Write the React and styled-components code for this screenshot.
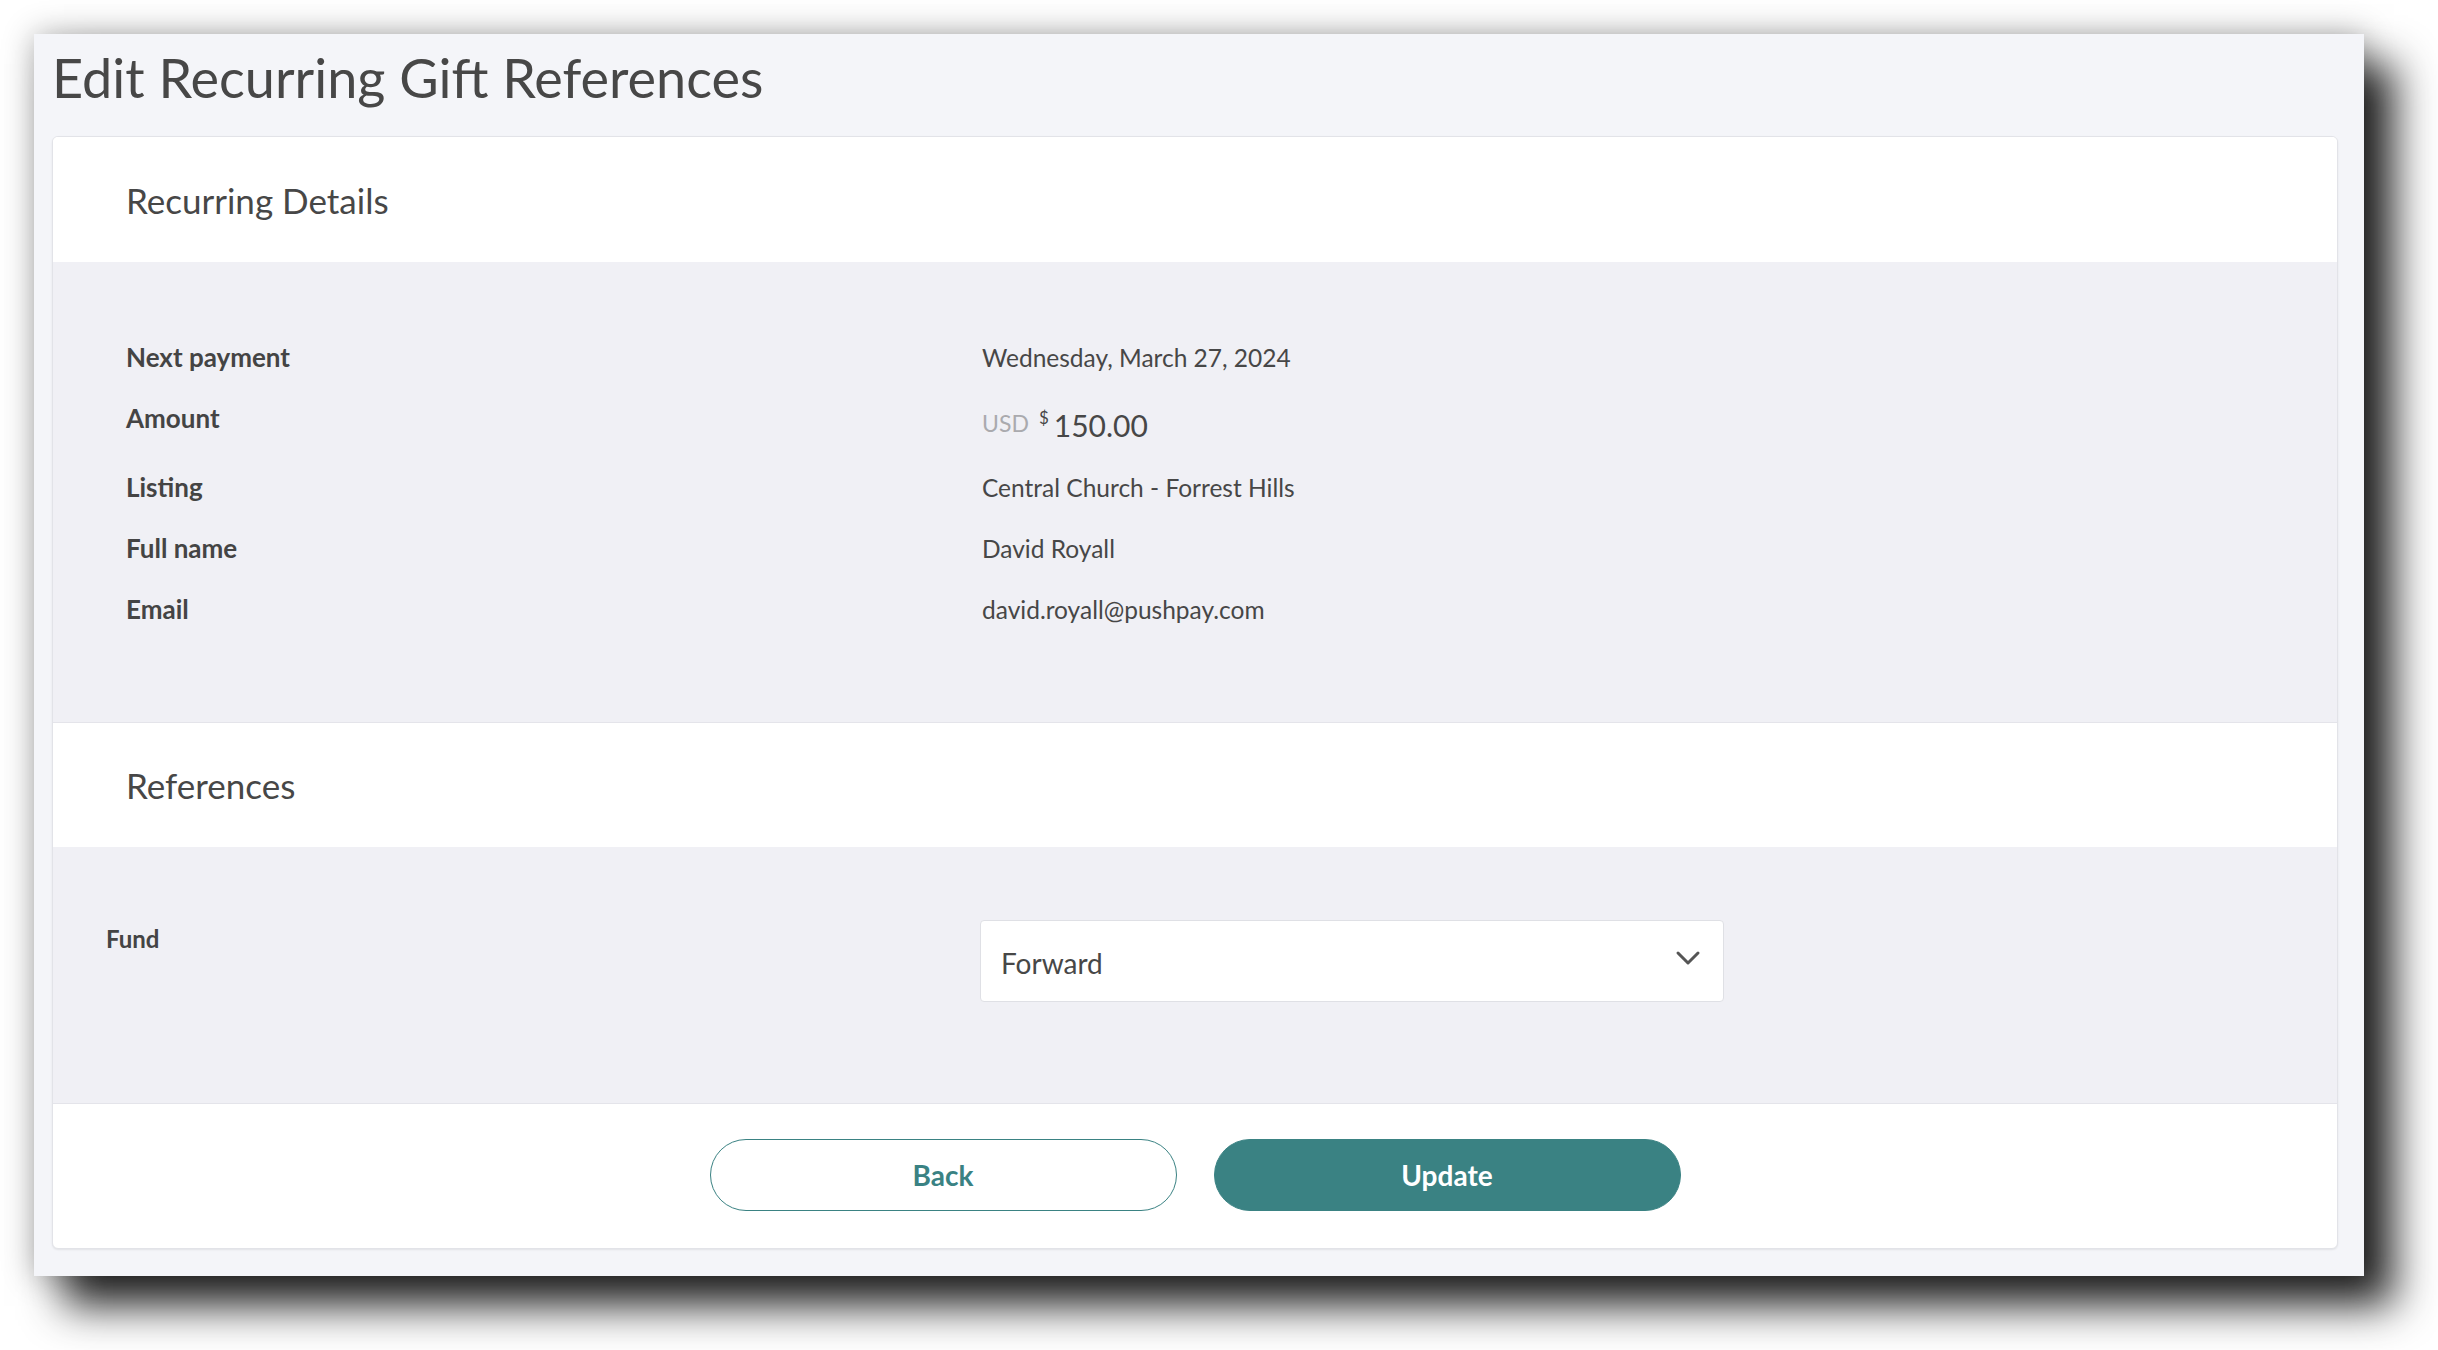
import React from 'react';
import styled, { createGlobalStyle } from 'styled-components';

const teal = '#3a8283';
const ink = '#474747';

const GlobalStyle = createGlobalStyle`
  html, body {
    margin: 0;
    padding: 0;
    min-height: 100%;
    background: #ffffff;
  }
  body {
    font-family: Lato, "Open Sans", sans-serif;
    color: ${ink};
  }
  * {
    box-sizing: border-box;
  }
`;

const Page = styled.div`
  min-height: 100vh;
  padding: 34px 0 74px 34px;
`;

const Window = styled.div`
  width: 2330px;
  height: 1242px;
  padding: 0 26px 0 18px;
  background: #f4f5f9;
  box-shadow: 30px 30px 40px rgba(0, 0, 0, 0.85), 0 0 30px rgba(0, 0, 0, 0.3);
  display: flex;
  flex-direction: column;
`;

const PageTitle = styled.h1`
  margin: 0;
  height: 102px;
  padding-top: 17px;
  font-size: 54px;
  line-height: 1;
  font-weight: 400;
  color: ${ink};
`;

const Card = styled.div`
  background: #ffffff;
  border: 1px solid #e2e3e8;
  border-radius: 6px;
  box-shadow: 0 1px 2px rgba(0, 0, 0, 0.08);
  overflow: hidden;
`;

const SectionHeader = styled.div`
  height: ${(props) => props.height}px;
  border-top: ${(props) => (props.divided ? '1px solid #e4e4ea' : 'none')};
  display: flex;
  align-items: center;
  padding-left: 73px;
  background: #ffffff;
`;

const SectionTitle = styled.h2`
  margin: 0;
  font-size: 35px;
  font-weight: 400;
  color: ${ink};
`;

const SectionBody = styled.div`
  background: #f0f0f5;
  height: ${(props) => props.height}px;
  padding: ${(props) => props.padding};
`;

const DetailRow = styled.div`
  display: grid;
  grid-template-columns: 856px 1fr;
  height: ${(props) => props.height || 61}px;
  line-height: 61px;
`;

const DetailLabel = styled.div`
  font-size: 26px;
  font-weight: 700;
  color: #444;
`;

const DetailValue = styled.div`
  font-size: 24.5px;
  font-weight: 400;
  color: ${ink};
`;

const AmountValue = styled.div`
  line-height: 60px;
  white-space: nowrap;
`;

const Currency = styled.span`
  font-size: 23px;
  color: #aaaaae;
  vertical-align: 5px;
  margin-right: 10px;
`;

const Dollar = styled.span`
  font-size: 17px;
  vertical-align: 13px;
  margin-right: 5px;
`;

const Figure = styled.span`
  font-size: 30px;
`;

const FieldRow = styled.div`
  display: grid;
  grid-template-columns: 874px 744px;
  align-items: start;
`;

const FieldLabel = styled.label`
  padding-top: 5px;
  font-size: 24px;
  line-height: 1.2;
  font-weight: 700;
  color: #444;
`;

const Select = styled.div`
  height: 82px;
  background: #ffffff;
  border: 1px solid #dfe0e5;
  border-radius: 4px;
  display: flex;
  align-items: center;
  justify-content: space-between;
  padding: 4px 22px 0 20px;
  font-size: 28px;
  color: ${ink};
`;

const Chevron = () => (
  <svg width="26" height="16" viewBox="0 0 26 16" style={{ marginTop: -10 }}>
    <polyline
      points="3,3 13,13 23,3"
      fill="none"
      stroke="#555"
      strokeWidth="3"
      strokeLinecap="round"
      strokeLinejoin="round"
    />
  </svg>
);

const Footer = styled.div`
  border-top: 1px solid #e4e4ea;
  height: 145px;
  padding-top: 35px;
  display: flex;
  justify-content: center;
  gap: 37px;
`;

const Button = styled.button`
  width: 467px;
  height: 72px;
  border-radius: 36px;
  border: 1.5px solid ${teal};
  background: ${(props) => (props.primary ? teal : '#ffffff')};
  color: ${(props) => (props.primary ? '#ffffff' : teal)};
  font-family: Lato, "Open Sans", sans-serif;
  font-size: 28px;
  font-weight: 700;
  cursor: pointer;
`;

const details = [
  { label: 'Next payment', value: 'Wednesday, March 27, 2024' },
  { label: 'Amount', amount: '150.00' },
  { label: 'Listing', value: 'Central Church - Forrest Hills' },
  { label: 'Full name', value: 'David Royall' },
  { label: 'Email', value: 'david.royall@pushpay.com' },
];

export default function App() {
  return (
    <>
      <GlobalStyle />
      <Page>
        <Window>
          <PageTitle>Edit Recurring Gift References</PageTitle>
          <Card>
            <SectionHeader height={125}>
              <SectionTitle>Recurring Details</SectionTitle>
            </SectionHeader>
            <SectionBody height={460} padding="65px 0 0 73px">
              {details.map(({ label, value, amount }) => (
                <DetailRow key={label} height={amount ? 69 : 61}>
                  <DetailLabel>{label}</DetailLabel>
                  {amount ? (
                    <AmountValue>
                      <Currency>USD</Currency>
                      <Dollar>$</Dollar>
                      <Figure>{amount}</Figure>
                    </AmountValue>
                  ) : (
                    <DetailValue>{value}</DetailValue>
                  )}
                </DetailRow>
              ))}
            </SectionBody>
            <SectionHeader height={125} divided>
              <SectionTitle>References</SectionTitle>
            </SectionHeader>
            <SectionBody height={256} padding="73px 0 0 53px">
              <FieldRow>
                <FieldLabel>Fund</FieldLabel>
                <Select>
                  <span>Forward</span>
                  <Chevron />
                </Select>
              </FieldRow>
            </SectionBody>
            <Footer>
              <Button>Back</Button>
              <Button primary>Update</Button>
            </Footer>
          </Card>
        </Window>
      </Page>
    </>
  );
}
